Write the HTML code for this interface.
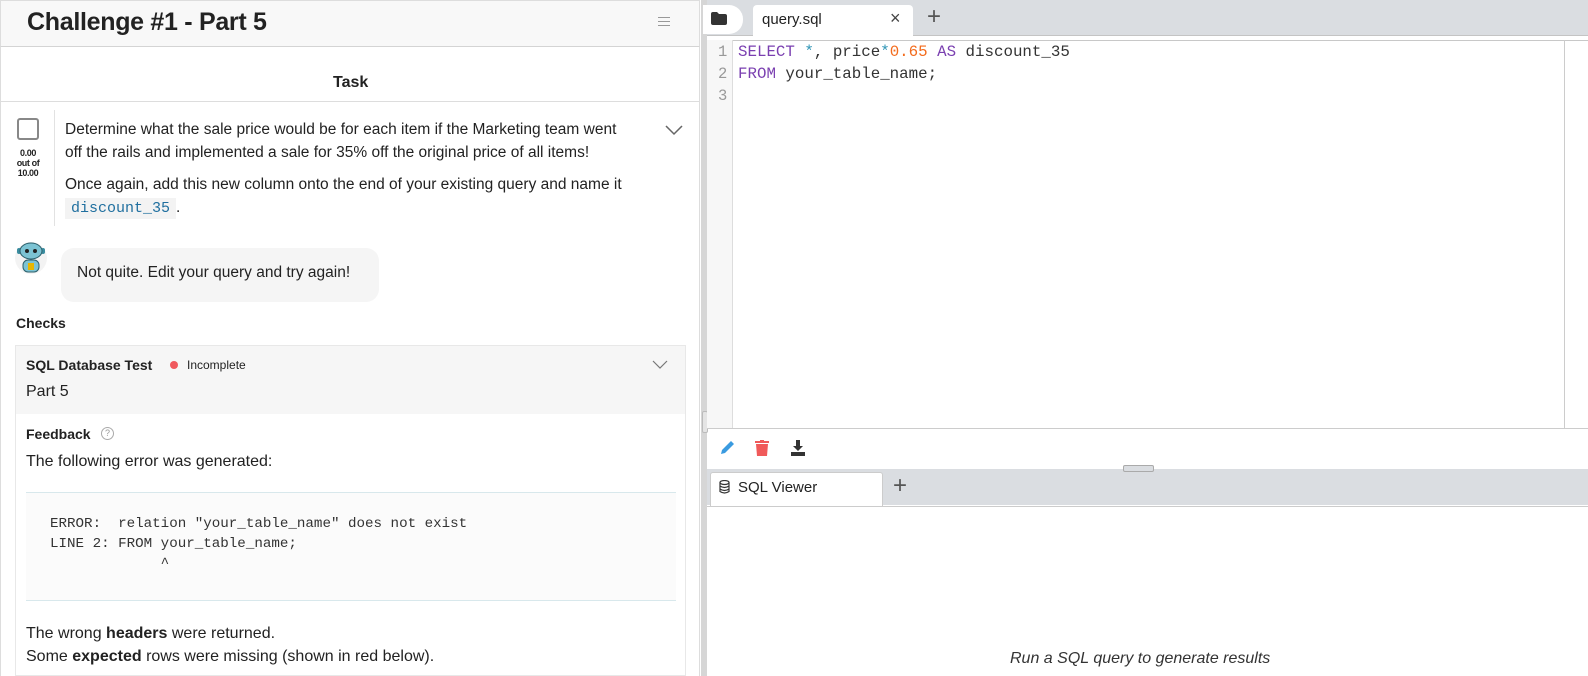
<!DOCTYPE html>
<html><head><meta charset="utf-8"><style>
*{box-sizing:border-box;margin:0;padding:0}
body{width:1588px;height:676px;overflow:hidden;background:#fff;font-family:"Liberation Sans",sans-serif;color:#222;position:relative}
.a{position:absolute}
.mono{font-family:"Liberation Mono",monospace}
</style></head><body>
<div class="a" style="left:0;top:0;width:700px;height:676px;border-left:1px solid #ddd;border-right:1px solid #ddd"></div>
<div class="a" style="left:0;top:0;width:700px;height:47px;background:#f8f8f8;border:1px solid #ddd;border-bottom:1px solid #d4d4d4"></div>
<div class="a" style="left:27px;top:8px;font-size:25px;font-weight:bold;color:#222;letter-spacing:-0.3px">Challenge #1 - Part 5</div>
<div class="a" style="left:658px;top:17px;width:12px;height:1px;background:#999;box-shadow:0 4px 0 #999,0 8px 0 #999"></div>
<div class="a" style="left:333px;top:74px;font-size:16px;font-weight:bold">Task</div>
<div class="a" style="left:0;top:101px;width:700px;height:1px;background:#ddd"></div>
<div class="a" style="left:17px;top:118px;width:22px;height:22px;border:2px solid #888;border-radius:3px"></div>
<div class="a" style="left:10px;top:148px;width:36px;text-align:center;font-size:9px;line-height:10px;color:#222;font-weight:bold;letter-spacing:-0.4px">0.00<br>out of<br>10.00</div>
<div class="a" style="left:54px;top:110px;width:1px;height:116px;background:#e2e2e2"></div>
<div class="a" style="left:65px;top:118px;width:555px;font-size:15.5px;line-height:23px">Determine what the sale price would be for each item if the Marketing team went off the rails and implemented a sale for 35% off the original price of all items!</div>
<div class="a" style="left:65px;top:173px;width:610px;font-size:15.5px;line-height:23px">Once again, add this new column onto the end of your existing query and name it <br><span class="mono" style="background:#f3f3f3;color:#1f6f9f;padding:2px 6px;font-size:15px">discount_35</span>.</div>
<svg class="a" style="left:664px;top:124px" width="20" height="12"><path d="M2 2 L10 10 L18 2" fill="none" stroke="#666" stroke-width="1.5"/></svg>
<svg class="a" style="left:14px;top:240px" width="34" height="36" viewBox="0 0 34 36">
<circle cx="17" cy="18" r="16" fill="#f3f3f3"/>
<rect x="3" y="8" width="4" height="6" rx="2" fill="#3a8da0"/><rect x="27" y="8" width="4" height="6" rx="2" fill="#3a8da0"/>
<ellipse cx="17" cy="11" rx="11" ry="8" fill="#7cc3d3" stroke="#2b5f6b" stroke-width="1"/>
<circle cx="13" cy="11" r="2" fill="#222"/><circle cx="21" cy="11" r="2" fill="#222"/>
<rect x="9" y="20" width="16" height="12" rx="5" fill="#7cc3d3" stroke="#2b5f6b" stroke-width="1"/>
<rect x="14" y="23" width="6" height="7" fill="#e8b600"/></svg>
<div class="a" style="left:61px;top:248px;width:318px;height:54px;background:#f5f5f5;border-radius:13px"></div>
<div class="a" style="left:77px;top:264px;font-size:15.5px">Not quite. Edit your query and try again!</div>
<div class="a" style="left:16px;top:315px;font-size:14px;font-weight:bold">Checks</div>
<div class="a" style="left:15px;top:345px;width:671px;height:331px;border:1px solid #e8e8e8"></div>
<div class="a" style="left:16px;top:346px;width:669px;height:68px;background:#f6f6f6"></div>
<div class="a" style="left:26px;top:357px;font-size:14px;font-weight:bold">SQL Database Test</div>
<div class="a" style="left:170px;top:361px;width:8px;height:8px;border-radius:50%;background:#f0595e"></div>
<div class="a" style="left:187px;top:358px;font-size:12px">Incomplete</div>
<svg class="a" style="left:652px;top:360px" width="16" height="10"><path d="M1 1 L8 8 L15 1" fill="none" stroke="#777" stroke-width="1.2"/></svg>
<div class="a" style="left:26px;top:383px;font-size:16px">Part 5</div>
<div class="a" style="left:26px;top:426px;font-size:14px;font-weight:bold">Feedback</div>
<div class="a" style="left:101px;top:427px;width:13px;height:13px;border:1px solid #aaa;border-radius:50%;font-size:9px;color:#999;text-align:center;line-height:11px">?</div>
<div class="a" style="left:26px;top:453px;font-size:16px">The following error was generated:</div>
<div class="a" style="left:26px;top:492px;width:650px;height:109px;background:#fbfbfb;border-top:1px solid #d8e8ec;border-bottom:1px solid #d8e8ec"></div>
<pre class="a mono" style="left:50px;top:514px;font-size:14.2px;line-height:20px;color:#333">ERROR:  relation "your_table_name" does not exist
LINE 2: FROM your_table_name;
             ^</pre>
<div class="a" style="left:26px;top:622px;font-size:16px;line-height:23px">The wrong <b>headers</b> were returned.<br>Some <b>expected</b> rows were missing (shown in red below).</div>
<div class="a" style="left:701px;top:0;width:6px;height:676px;background:#d6d6d6"></div>
<div class="a" style="left:702px;top:411px;width:6px;height:22px;background:#e4e4e4;border:1px solid #bbb;border-radius:2px"></div>
<div class="a" style="left:707px;top:0;width:881px;height:36px;background:#dadde1;border-bottom:1px solid #c4c4c4"></div>
<div class="a" style="left:703px;top:5px;width:40px;height:29px;background:#fff;border-radius:0 14px 14px 0"></div>
<svg class="a" style="left:711px;top:12px" width="16" height="13"><path d="M0 2 Q0 0 2 0 L6 0 L8 2 L14 2 Q16 2 16 4 L16 11 Q16 13 14 13 L2 13 Q0 13 0 11Z" fill="#333"/></svg>
<div class="a" style="left:753px;top:5px;width:160px;height:31px;background:#fff;border-radius:4px 4px 0 0"></div>
<div class="a" style="left:762px;top:11px;font-size:15px">query.sql</div>
<div class="a" style="left:890px;top:8px;font-size:18px;color:#444">×</div>
<div class="a" style="left:927px;top:3px;font-size:24px;color:#555;font-weight:300">+</div>
<div class="a" style="left:707px;top:40px;width:26px;height:389px;background:#f7f7f7;border-right:1px solid #ddd"></div>
<div class="a" style="left:733px;top:40px;width:855px;height:1px;background:#c8c8c8"></div>
<div class="a" style="left:1564px;top:40px;width:1px;height:389px;background:#ccc"></div>
<pre class="a mono" style="left:718px;top:41px;font-size:15.5px;line-height:22px;color:#999;text-align:right">1
2
3</pre>
<pre class="a mono" style="left:738px;top:41px;font-size:15.8px;line-height:22px;color:#333"><span style="color:#7a3fb0">SELECT</span> <span style="color:#2b93b5">*</span>, price<span style="color:#2b93b5">*</span><span style="color:#f36b1c">0.65</span> <span style="color:#7a3fb0">AS</span> discount_35
<span style="color:#7a3fb0">FROM</span> your_table_name;</pre>
<div class="a" style="left:707px;top:428px;width:881px;height:1px;background:#ccc"></div>
<svg class="a" style="left:719px;top:440px" width="16" height="16"><path d="M2 14 L3 10 L12 1 L15 4 L6 13Z" fill="#3a9be0"/></svg>
<svg class="a" style="left:755px;top:440px" width="14" height="16"><rect x="0" y="1" width="14" height="2" fill="#f05a5a"/><rect x="5" y="0" width="4" height="2" fill="#f05a5a"/><path d="M1 4 L13 4 L12 16 L2 16Z" fill="#f05a5a"/></svg>
<svg class="a" style="left:790px;top:440px" width="16" height="16"><path d="M6 0 L10 0 L10 6 L13 6 L8 11 L3 6 L6 6Z" fill="#333"/><rect x="1" y="12" width="14" height="4" fill="#333"/></svg>
<div class="a" style="left:707px;top:469px;width:881px;height:36px;background:#dadde1"></div>
<div class="a" style="left:1123px;top:465px;width:31px;height:7px;background:#dadde1;border:1px solid #aaa;border-radius:2px"></div>
<div class="a" style="left:710px;top:472px;width:173px;height:34px;background:#fff;border-radius:3px 3px 0 0;border:1px solid #ccc;border-bottom:none"></div>
<svg class="a" style="left:719px;top:480px" width="11" height="14"><ellipse cx="5.5" cy="2.5" rx="4.5" ry="2" fill="none" stroke="#333" stroke-width="1.2"/><path d="M1 2.5 V11.5 Q5.5 14.5 10 11.5 V2.5 M1 6 Q5.5 9 10 6 M1 9 Q5.5 12 10 9" fill="none" stroke="#333" stroke-width="1.2"/></svg>
<div class="a" style="left:738px;top:479px;font-size:15px">SQL Viewer</div>
<div class="a" style="left:893px;top:472px;font-size:24px;color:#555;font-weight:300">+</div>
<div class="a" style="left:707px;top:506px;width:881px;height:1px;background:#ccc"></div>
<div class="a" style="left:1010px;top:650px;font-size:16px;font-style:italic;color:#333">Run a SQL query to generate results</div>
</body></html>
